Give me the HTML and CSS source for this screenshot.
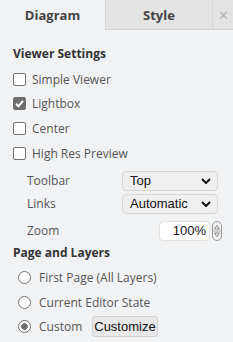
FILE: index.html
```html
<!DOCTYPE html>
<html lang="en">
<head>
    <meta charset="UTF-8">
    <title>Format Panel</title>
    <link rel="stylesheet" href="styles.css">
</head>
<body>
    <div class="tabs">
        <div class="tab active">Diagram</div>
        <div class="tab">Style</div>
        <div class="tab close">&#x2715;</div>
    </div>

    <div class="panel">
        <h3 class="heading">Viewer Settings</h3>
        <label class="check-row"><span class="box"></span>Simple Viewer</label>
        <label class="check-row"><span class="box checked"><svg viewBox="0 0 13 13" width="13" height="13"><path d="M3 6.8 L5.4 9.2 L10 3.8" fill="none" stroke="#fff" stroke-width="2"/></svg></span>Lightbox</label>
        <label class="check-row"><span class="box"></span>Center</label>
        <label class="check-row"><span class="box"></span>High Res Preview</label>

        <div class="opt-row first">
            <span class="opt-label">Toolbar</span>
            <div class="select">Top<svg class="chev" viewBox="0 0 10 6" width="10" height="6"><path d="M1 1 L5 5 L9 1" fill="none" stroke="#111" stroke-width="2"/></svg></div>
        </div>
        <div class="opt-row">
            <span class="opt-label">Links</span>
            <div class="select">Automatic<svg class="chev" viewBox="0 0 10 6" width="10" height="6"><path d="M1 1 L5 5 L9 1" fill="none" stroke="#111" stroke-width="2"/></svg></div>
        </div>
        <div class="opt-row zoom">
            <span class="opt-label">Zoom</span>
            <div class="num">100%</div>
            <svg class="spin" viewBox="0 0 10 20" width="10" height="20">
                <rect x="0.5" y="0.5" width="9" height="19" rx="4.5" fill="none" stroke="#999"/>
                <path d="M2.5 8 L5 4.5 L7.5 8 Z" fill="none" stroke="#888"/>
                <path d="M2.5 12 L5 15.5 L7.5 12 Z" fill="none" stroke="#888"/>
                <line x1="1" y1="10" x2="9" y2="10" stroke="#aaa"/>
            </svg>
        </div>

        <h3 class="heading second">Page and Layers</h3>
        <label class="radio-row"><span class="dot"></span>First Page (All Layers)</label>
        <label class="radio-row"><span class="dot"></span>Current Editor State</label>
        <label class="radio-row"><span class="dot on"></span>Custom<button class="btn">Customize</button></label>
    </div>
</body>
</html>
```

FILE: styles.css
```css
body {
    margin: 0;
    background-color: #f1f2f4;
    font-family: 'Open Sans', 'Noto Sans', sans-serif;
    font-size: 12px;
    color: #555;
    width: 233px;
    height: 342px;
    overflow: hidden;
}

.tabs {
    display: flex;
    height: 30px;
}

.tab {
    width: 107px;
    box-sizing: border-box;
    background-color: #e4e4e4;
    border-left: 1px solid #d5d5d5;
    border-bottom: 1px solid #d5d5d5;
    font-weight: bold;
    font-size: 13px;
    color: #444;
    display: flex;
    align-items: center;
    justify-content: center;
}

.tab.active {
    width: 105px;
    background-color: #f1f2f4;
    border: none;
}

.tab.close {
    width: 21px;
    color: #a9b2bb;
    font-weight: normal;
    font-size: 13px;
}

.panel {
    padding: 14px 0 0 13px;
}

.heading {
    margin: 0;
    height: 20px;
    line-height: 20px;
    font-size: 12px;
    font-weight: bold;
    color: #333;
}

.heading.second {
    margin-top: -1px;
}

.check-row {
    display: flex;
    align-items: center;
    height: 24.6px;
}

.heading + .check-row {
    margin-top: 3px;
}

.box {
    width: 13px;
    height: 13px;
    box-sizing: border-box;
    border: 1px solid #727272;
    border-radius: 2px;
    background-color: #fff;
    margin-right: 6px;
    display: flex;
}

.box.checked {
    background-color: #6e6e6e;
    border-color: #6e6e6e;
}

.box svg {
    margin: -1px;
}

.opt-row {
    display: flex;
    align-items: center;
    height: 23px;
    padding-left: 14px;
}

.opt-row.first {
    margin-top: 4px;
}

.opt-label {
    flex: 1;
}

.select {
    width: 96px;
    height: 20px;
    box-sizing: border-box;
    margin-right: 15px;
    background-color: #efefef;
    border: 1px solid #d6d6d6;
    border-radius: 4px;
    padding: 0 6px 0 7px;
    display: flex;
    align-items: center;
    justify-content: space-between;
    font-family: 'Liberation Sans', Arial, sans-serif;
    font-size: 13px;
    color: #111;
}

.opt-row.zoom {
    height: 27px;
    margin-top: 2px;
}

.num {
    width: 51px;
    height: 20px;
    box-sizing: border-box;
    background-color: #fff;
    border: 1px solid #e2e2e2;
    border-radius: 4px;
    padding-right: 3px;
    text-align: right;
    line-height: 18px;
    font-family: 'Liberation Sans', Arial, sans-serif;
    font-size: 13px;
    color: #111;
}

.spin {
    margin: 0 11px 0 2px;
}

.radio-row {
    display: flex;
    align-items: center;
    height: 24.6px;
    padding-left: 5px;
}

.heading + .radio-row {
    margin-top: 2px;
}

.dot {
    width: 13px;
    height: 13px;
    box-sizing: border-box;
    border: 1px solid #727272;
    border-radius: 50%;
    background-color: #fff;
    margin-right: 8px;
}

.dot.on {
    border-color: #6e6e6e;
    background: radial-gradient(circle, #6e6e6e 0, #6e6e6e 3px, #fff 3.5px);
}

.btn {
    margin-left: 10px;
    height: 21px;
    padding: 0 1px;
    background-color: #e8e8e8;
    border: 1px solid #d3d3d3;
    border-radius: 3px;
    font-family: 'Liberation Sans', Arial, sans-serif;
    font-size: 13px;
    color: #111;
}
```
